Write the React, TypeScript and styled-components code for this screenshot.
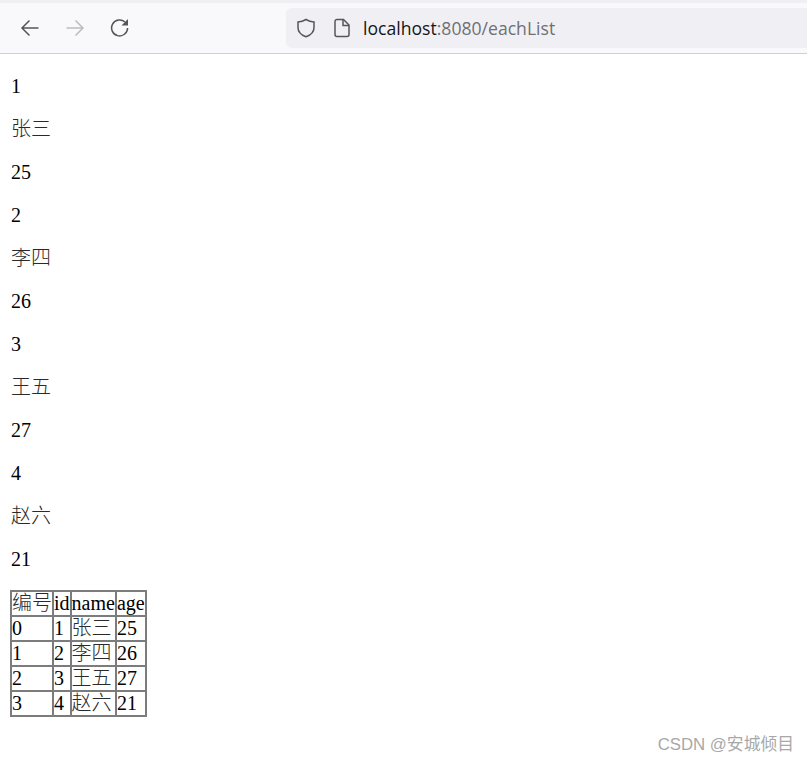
import React from 'react'
import styled, { createGlobalStyle } from 'styled-components'

type Person = {
  readonly id: number
  readonly name: string
  readonly age: number
}

const people: Person[] = [
  { id: 1, name: '张三', age: 25 },
  { id: 2, name: '李四', age: 26 },
  { id: 3, name: '王五', age: 27 },
  { id: 4, name: '赵六', age: 21 },
]

const columns = ['编号', 'id', 'name', 'age']

const App: React.FC = () => {
  return (
    <Page>
      <GlobalStyle />
      <TopStrip />
      <Toolbar>
        <NavButtons>
          <NavIcon viewBox="0 0 20 20">
            <path d="M18.5 10H2M9.5 2.5L2 10l7.5 7.5" />
          </NavIcon>
          <NavIcon viewBox="0 0 20 20" disabled>
            <path d="M1.5 10H18M10.500 2.500L18 10l-7.500 7.500" />
          </NavIcon>
          <NavIcon viewBox="0 0 20 20">
            <path d="M17.600 10a8 8 0 1 1-2.600-6" />
            <path d="M18 1v6.500h-6.500z" fill="#55555c" stroke="none" />
          </NavIcon>
        </NavButtons>
        <UrlBar>
          <ShieldIcon viewBox="0 0 20 20">
            <path d="M10 1.500c2.600 1.600 5 2.300 8 2.500v5.500c0 4.300-3 7.500-8 9.300-5-1.800-8-5-8-9.300V4c3-.2 5.400-.9 8-2.500z" />
          </ShieldIcon>
          <PageIcon viewBox="0 0 20 20">
            <path d="M3 3.500A2 2 0 0 1 5 1.500h6.500L17 7v9.500a2 2 0 0 1-2 2H5a2 2 0 0 1-2-2z" />
            <path d="M11 1.500V7.500h6" />
          </PageIcon>
          <UrlText>
            localhost<UrlRest>:8080/eachList</UrlRest>
          </UrlText>
        </UrlBar>
      </Toolbar>
      <Content>
        {people.map(person => (
          <React.Fragment key={person.id}>
            <Line>{person.id}</Line>
            <Line>
              <CjkText>{person.name}</CjkText>
            </Line>
            <Line>{person.age}</Line>
          </React.Fragment>
        ))}
        <PeopleTable>
          <tbody>
            <Row>
              <Cell><CjkText>{columns[0]}</CjkText></Cell>
              {columns.slice(1).map(column => (
                <Cell key={column}>{column}</Cell>
              ))}
            </Row>
            {people.map((person, index) => (
              <Row key={person.id}>
                <Cell>{index}</Cell>
                <Cell>{person.id}</Cell>
                <Cell><CjkText>{person.name}</CjkText></Cell>
                <Cell>{person.age}</Cell>
              </Row>
            ))}
          </tbody>
        </PeopleTable>
      </Content>
      <Watermark>CSDN @安城倾目</Watermark>
    </Page>
  )
}

export default App

const GlobalStyle = createGlobalStyle`
  html, body {
    margin: 0;
    padding: 0;
    background: #ffffff;
  }
`

const Page = styled.div`
  position: relative;
  width: 807px;
  height: 763px;
  overflow: hidden;
  font-family: "Liberation Serif", "Noto Sans CJK SC", serif;
  font-size: 20px;
  color: #000000;
`

const TopStrip = styled.div`
  height: 3px;
  background: #f0f0f4;
`

const Toolbar = styled.div`
  display: flex;
  align-items: center;
  height: 50px;
  padding-left: 20px;
  background: #f9f9fb;
  border-bottom: 1px solid #cfcfd3;
`

const NavButtons = styled.div`
  display: flex;
  align-items: center;
  gap: 25px;
  width: 266px;
`

type NavIconProps = {
  readonly disabled?: boolean
}

const NavIcon = styled.svg<NavIconProps>`
  width: 20px;
  height: 20px;
  fill: none;
  stroke: ${props => props.disabled ? '#bdbdc1' : '#55555c'};
  stroke-width: 1.5;
`

const UrlBar = styled.div`
  flex: 1;
  display: flex;
  align-items: center;
  height: 40px;
  margin-top: -1px;
  padding-left: 10px;
  background: #f0f0f4;
  border-radius: 6px 0 0 6px;
`

const ShieldIcon = styled.svg`
  width: 20px;
  height: 20px;
  margin-right: 16px;
  fill: none;
  stroke: #55555c;
  stroke-width: 1.5;
`

const PageIcon = styled.svg`
  width: 20px;
  height: 20px;
  margin-right: 11px;
  fill: none;
  stroke: #55555c;
  stroke-width: 1.5;
`

const UrlText = styled.span`
  font-family: "Open Sans", "Noto Sans", sans-serif;
  font-size: 17.6px;
  color: #15141a;
`

const UrlRest = styled.span`
  color: #6f6f75;
`

const Content = styled.div`
  padding: 21px 11px 0;
`

const Line = styled.p`
  margin: 0 0 20px;
  line-height: 23px;
`

const CjkText = styled.span`
  font-weight: 300;
  color: #2a2a2a;
`

const PeopleTable = styled.table`
  border-collapse: collapse;
  margin: -1px 0 0 -1px;
  border: 2px solid #7c7c7c;
`

const Row = styled.tr`
  height: 25px;
`

const Cell = styled.td`
  padding: 0;
  border: 2px solid #7c7c7c;
  line-height: 23px;
`

const Watermark = styled.div`
  position: absolute;
  right: 13px;
  bottom: 8px;
  font-family: "Liberation Sans", "Noto Sans CJK SC", sans-serif;
  font-size: 16.8px;
  color: #a8a8a8;
`
